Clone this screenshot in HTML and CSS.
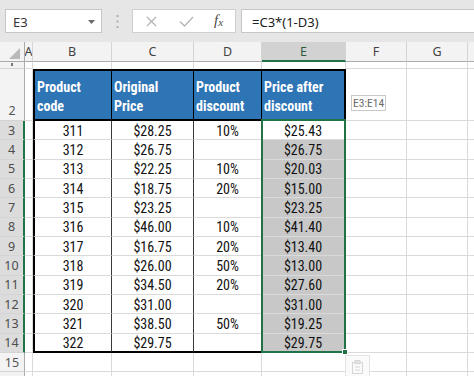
FILE: index.html
```html
<!DOCTYPE html>
<html>
<head>
<meta charset="utf-8">
<link rel="stylesheet" href="styles.css">
</head>
<body>
<div class="app">
  <div class="toolbar">
    <div class="namebox">
      <span class="nb-text">E3</span>
      <svg class="caret" width="7" height="4" viewBox="0 0 7 4"><path d="M0 0H7L3.5 4Z" fill="#6a6a6a"/></svg>
    </div>
    <div class="grip">
      <svg width="3" height="13" viewBox="0 0 3 13"><rect x="0.5" y="0" width="2" height="2" fill="#b0b0b0"/><rect x="0.5" y="5.5" width="2" height="2" fill="#b0b0b0"/><rect x="0.5" y="11" width="2" height="2" fill="#b0b0b0"/></svg>
    </div>
    <div class="fbtns">
      <svg class="ic-x" width="11" height="11" viewBox="0 0 11 11"><path d="M1 1L10 10M10 1L1 10" stroke="#b4b4b4" stroke-width="1.3" fill="none"/></svg>
      <svg class="ic-ok" width="15" height="11" viewBox="0 0 15 11"><path d="M1 5.5L5.5 10L14 1" stroke="#b4b4b4" stroke-width="1.3" fill="none"/></svg>
      <span class="fx">f<span class="fx-x">x</span></span>
    </div>
    <div class="formula">=C3*(1-D3)</div>
  </div>

  <div class="sheet">
    <!-- column headers -->
    <div class="ch corner"><span class="tri"></span></div>
    <div class="ch">A</div>
    <div class="ch">B</div>
    <div class="ch">C</div>
    <div class="ch">D</div>
    <div class="ch ch-sel">E</div>
    <div class="ch">F</div>
    <div class="ch">G</div>
    <div class="ch"></div>

    <!-- row 1 -->
    <div class="rh rh1"><span class="tick"></span></div>
    <div class="c"></div><div class="c above"></div><div class="c above"></div><div class="c above"></div><div class="c above"></div><div class="c"></div><div class="c"></div><div class="c"></div>

    <!-- row 2 -->
    <div class="rh rh2">2</div>
    <div class="c"></div>
    <div class="c th th-first"><span>Product</span><span>code</span></div>
    <div class="c th"><span>Original</span><span>Price</span></div>
    <div class="c th"><span>Product</span><span>discount</span></div>
    <div class="c th th-last"><span>Price after</span><span>discount</span></div>
    <div class="c tipcell"><div class="tip">E3:E14</div></div>
    <div class="c"></div><div class="c"></div>

    <!-- row 3 -->
    <div class="rh rh-sel">3</div>
    <div class="c"></div>
    <div class="c td td-first">311</div><div class="c td">$28.25</div><div class="c td">10%</div>
    <div class="c td td-last active">$25.43<div class="selection"><span class="handle"></span></div></div>
    <div class="c"></div><div class="c"></div><div class="c"></div>

    <!-- row 4 -->
    <div class="rh rh-sel">4</div>
    <div class="c"></div>
    <div class="c td td-first">312</div><div class="c td">$26.75</div><div class="c td"></div><div class="c td td-last sel">$26.75</div>
    <div class="c"></div><div class="c"></div><div class="c"></div>

    <!-- row 5 -->
    <div class="rh rh-sel">5</div>
    <div class="c"></div>
    <div class="c td td-first">313</div><div class="c td">$22.25</div><div class="c td">10%</div><div class="c td td-last sel">$20.03</div>
    <div class="c"></div><div class="c"></div><div class="c"></div>

    <!-- row 6 -->
    <div class="rh rh-sel">6</div>
    <div class="c"></div>
    <div class="c td td-first">314</div><div class="c td">$18.75</div><div class="c td">20%</div><div class="c td td-last sel">$15.00</div>
    <div class="c"></div><div class="c"></div><div class="c"></div>

    <!-- row 7 -->
    <div class="rh rh-sel">7</div>
    <div class="c"></div>
    <div class="c td td-first">315</div><div class="c td">$23.25</div><div class="c td"></div><div class="c td td-last sel">$23.25</div>
    <div class="c"></div><div class="c"></div><div class="c"></div>

    <!-- row 8 -->
    <div class="rh rh-sel">8</div>
    <div class="c"></div>
    <div class="c td td-first">316</div><div class="c td">$46.00</div><div class="c td">10%</div><div class="c td td-last sel">$41.40</div>
    <div class="c"></div><div class="c"></div><div class="c"></div>

    <!-- row 9 -->
    <div class="rh rh-sel">9</div>
    <div class="c"></div>
    <div class="c td td-first">317</div><div class="c td">$16.75</div><div class="c td">20%</div><div class="c td td-last sel">$13.40</div>
    <div class="c"></div><div class="c"></div><div class="c"></div>

    <!-- row 10 -->
    <div class="rh rh-sel">10</div>
    <div class="c"></div>
    <div class="c td td-first">318</div><div class="c td">$26.00</div><div class="c td">50%</div><div class="c td td-last sel">$13.00</div>
    <div class="c"></div><div class="c"></div><div class="c"></div>

    <!-- row 11 -->
    <div class="rh rh-sel">11</div>
    <div class="c"></div>
    <div class="c td td-first">319</div><div class="c td">$34.50</div><div class="c td">20%</div><div class="c td td-last sel">$27.60</div>
    <div class="c"></div><div class="c"></div><div class="c"></div>

    <!-- row 12 -->
    <div class="rh rh-sel">12</div>
    <div class="c"></div>
    <div class="c td td-first">320</div><div class="c td">$31.00</div><div class="c td"></div><div class="c td td-last sel">$31.00</div>
    <div class="c"></div><div class="c"></div><div class="c"></div>

    <!-- row 13 -->
    <div class="rh rh-sel">13</div>
    <div class="c"></div>
    <div class="c td td-first">321</div><div class="c td">$38.50</div><div class="c td">50%</div><div class="c td td-last sel">$19.25</div>
    <div class="c"></div><div class="c"></div><div class="c"></div>

    <!-- row 14 -->
    <div class="rh rh-sel">14</div>
    <div class="c"></div>
    <div class="c td td-first td-bottom">322</div><div class="c td td-bottom">$29.75</div><div class="c td td-bottom"></div><div class="c td td-last td-bottom sel">$29.75</div>
    <div class="c"></div><div class="c"></div><div class="c"></div>

    <!-- row 15 -->
    <div class="rh">15</div>
    <div class="c"></div><div class="c"></div><div class="c"></div><div class="c"></div><div class="c"></div>
    <div class="c pastecell">
      <div class="paste">
        <svg width="13" height="14" viewBox="0 0 13 14"><rect x="1.5" y="2.5" width="10" height="11" fill="none" stroke="#d6d6d6"/><rect x="4" y="0.5" width="5" height="3" fill="#e4e4e4" stroke="#d6d6d6"/><path d="M4 7H9M4 10H9" stroke="#d6d6d6"/></svg>
      </div>
    </div>
    <div class="c"></div><div class="c"></div>

    <!-- row 16 -->
    <div class="rh"></div>
    <div class="c"></div><div class="c"></div><div class="c"></div><div class="c"></div><div class="c"></div><div class="c"></div><div class="c"></div><div class="c"></div>
  </div>
</div>
</body>
</html>
```

FILE: styles.css
```css
* { box-sizing: border-box; }

html, body {
  margin: 0;
  padding: 0;
  background: #ffffff;
}

body {
  width: 474px;
  height: 376px;
  overflow: hidden;
}

.app {
  width: 474px;
  height: 376px;
  overflow: hidden;
}

/* ---------- formula toolbar ---------- */
.toolbar {
  height: 42px;
  background: #e6e6e6;
  display: flex;
  align-items: flex-start;
  padding: 9px 0 0 5px;
  font-family: "Noto Sans", "Open Sans", sans-serif;
}

.namebox {
  width: 97px;
  height: 24px;
  background: #ffffff;
  border: 1px solid #c6c6c6;
  display: flex;
  align-items: center;
  justify-content: space-between;
  padding: 0 6px 0 7px;
  font-size: 13px;
  color: #333333;
}

.nb-text { margin-top: 2px; }

.caret { margin-top: 1px; }

.grip {
  width: 30px;
  height: 24px;
  display: flex;
  justify-content: center;
  padding-top: 6px;
}

.fbtns {
  width: 104px;
  height: 24px;
  background: #ffffff;
  border: 1px solid #cfcfcf;
  display: flex;
  align-items: center;
  padding-left: 13px;
}

.ic-x { margin-top: 1px; }

.ic-ok { margin-left: 22px; margin-top: 1px; }

.fx {
  margin-left: 20px;
  font-family: "Liberation Serif", "DejaVu Serif", serif;
  font-style: italic;
  font-size: 15px;
  color: #4a4a4a;
  line-height: 1;
  margin-top: -1px;
}

.fx-x {
  font-size: 11px;
  position: relative;
  top: 1px;
}

.formula {
  flex: 1;
  margin-left: 5px;
  height: 24px;
  background: #ffffff;
  border: 1px solid #c6c6c6;
  border-right: none;
  padding: 3px 0 0 10px;
  font-size: 13px;
  color: #222222;
  line-height: 18px;
}

/* ---------- sheet grid ---------- */
.sheet {
  display: grid;
  grid-template-columns: 25px 8px 79px 82px 68px 84px 61px 61px 60px;
  grid-template-rows: 20px 7px 52px repeat(14, 19.333px);
  font-family: "Liberation Sans Narrow", "Arial Narrow", "Roboto Condensed", Roboto, sans-serif;
  font-size: 14px;
  color: #111111;
}

.ch {
  background: #f3f3f3;
  border-right: 1px solid #d4d4d4;
  border-bottom: 1px solid #ababab;
  display: flex;
  align-items: center;
  justify-content: center;
  font-family: "Noto Sans", "Open Sans", sans-serif;
  font-size: 12.5px;
  color: #444444;
  overflow: hidden;
}

.ch-sel {
  background: #d2d2d2;
  border-bottom: 2px solid #217346;
  color: #2b5a3f;
}

.corner {
  justify-content: flex-end;
  align-items: flex-end;
  padding: 0 4px 2px 0;
  border-right: 1px solid #ababab;
}

.tri {
  width: 0;
  height: 0;
  border-left: 11px solid transparent;
  border-bottom: 11px solid #b8b8b8;
}

.rh {
  background: #f3f3f3;
  border-right: 1px solid #ababab;
  border-bottom: 1px solid #d4d4d4;
  display: flex;
  align-items: center;
  justify-content: center;
  font-family: "Noto Sans", "Open Sans", sans-serif;
  font-size: 12.5px;
  color: #555555;
  overflow: hidden;
}

.rh1 {
  align-items: flex-start;
  padding-top: 1px;
}

.tick {
  width: 2px;
  height: 3px;
  background: #777777;
}

.rh2 {
  align-items: flex-end;
  padding-bottom: 1px;
}

.rh-sel {
  background: #dcdcdc;
  border-right: 2px solid #217346;
  color: #4c4c4c;
}

.c {
  border-right: 1px solid #dadada;
  border-bottom: 1px solid #dadada;
  min-width: 0;
}

.above { border-bottom: none; }

.th {
  background: #2e75b6;
  color: #ffffff;
  font-weight: bold;
  border-top: 2px solid #000000;
  border-bottom: 2px solid #000000;
  border-right: 1px solid #000000;
  display: flex;
  flex-direction: column;
  justify-content: flex-end;
  padding: 0 0 3px 2px;
  line-height: 19px;
  white-space: nowrap;
  overflow: hidden;
}

.th-first { border-left: 2px solid #000000; }

.th-last { border-right: 2px solid #000000; }

.td {
  border-right: 1px solid #3a3a3a;
  display: flex;
  align-items: center;
  justify-content: center;
  padding-top: 1px;
}

.td-first { border-left: 2px solid #000000; }

.td-last { border-right: 2px solid #000000; }

.td-bottom { border-bottom: 2px solid #000000; }

.sel { background: #c8c8c8; }

.active { position: relative; }

.selection {
  position: absolute;
  left: -1px;
  top: -2px;
  width: 85px;
  height: 234px;
  border: 2px solid #217346;
  z-index: 2;
  pointer-events: none;
}

.handle {
  position: absolute;
  right: -4px;
  bottom: -4px;
  width: 6px;
  height: 6px;
  background: #217346;
  border: 1px solid #ffffff;
}

.tipcell { position: relative; }

.tip {
  position: absolute;
  left: 5px;
  top: 26px;
  width: 35px;
  height: 16px;
  background: #ffffff;
  border: 1px solid #c8c8c8;
  font-size: 11.5px;
  line-height: 14px;
  color: #6a6a6a;
  text-align: center;
}

.pastecell { position: relative; }

.paste {
  position: absolute;
  left: -1px;
  top: 2px;
  width: 25px;
  height: 24px;
  border: 1px solid #e4e4e4;
  background: #fafafa;
  display: flex;
  justify-content: center;
  padding-top: 4px;
}
```
